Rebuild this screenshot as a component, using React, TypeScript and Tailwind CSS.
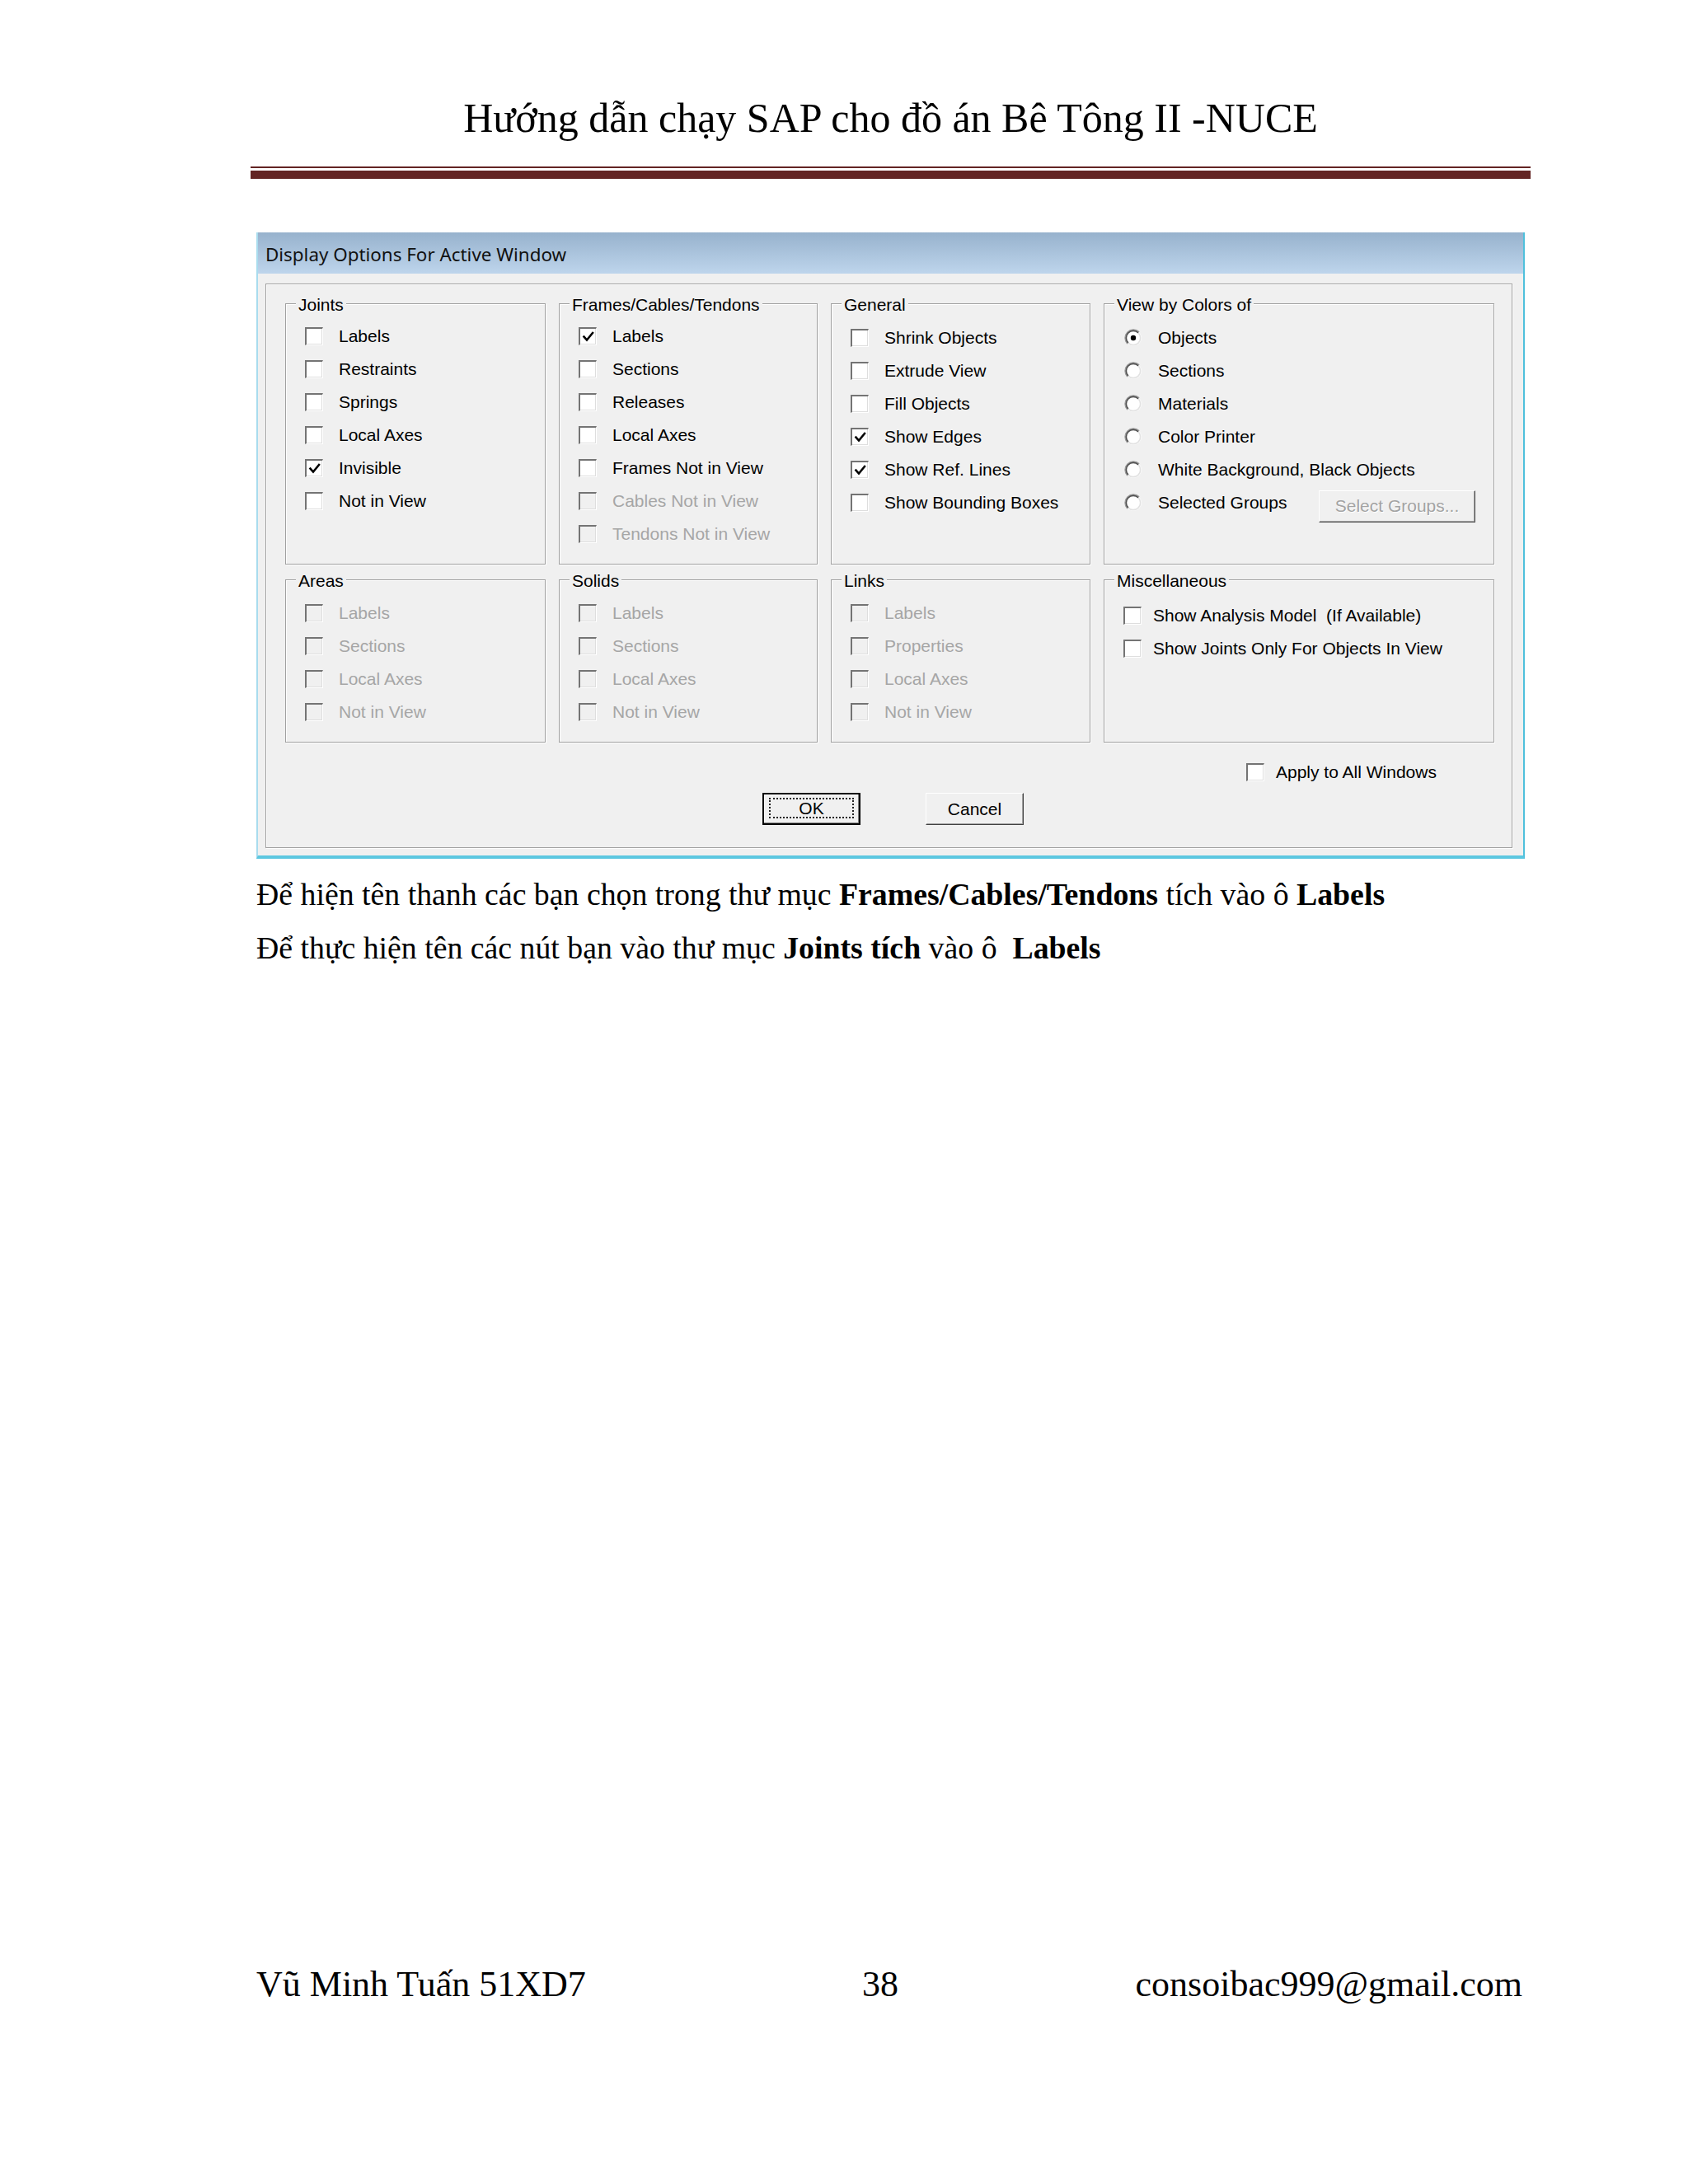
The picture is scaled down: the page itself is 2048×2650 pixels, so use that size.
import React from "react";

const SERIF = "font-['Liberation_Serif','Times_New_Roman',serif]";

function Check({ checked = false, disabled = false }: { checked?: boolean; disabled?: boolean }) {
  return (
    <span
      className={`flex h-[22px] w-[22px] shrink-0 items-center justify-center border-l-2 border-t-2 border-r border-b border-l-[#747474] border-t-[#747474] border-r-white border-b-white shadow-[inset_-1px_-1px_0_#dedede] ${
        disabled ? "bg-[#f0f0f0]" : "bg-white"
      }`}
    >
      {checked && (
        <svg width="18" height="18" viewBox="0 0 18 18">
          <path d="M3.5 8.5 L7 12.5 L14 4" stroke="#000" strokeWidth="2.6" fill="none" strokeLinecap="square" />
        </svg>
      )}
    </span>
  );
}

function Radio({ selected = false }: { selected?: boolean }) {
  return (
    <svg width="22" height="22" viewBox="0 0 22 22" className="shrink-0">
      <circle cx="11" cy="11" r="10" fill="#ffffff" />
      <path d="M3.93 18.07 A10 10 0 0 1 18.07 3.93" stroke="#9a9a9a" strokeWidth="1.6" fill="none" />
      <path d="M4.9 17.1 A8.6 8.6 0 0 1 17.1 4.9" stroke="#505050" strokeWidth="1.6" fill="none" />
      <path d="M17.1 4.9 A8.6 8.6 0 0 1 4.9 17.1" stroke="#e2e2e2" strokeWidth="1.6" fill="none" />
      {selected && <circle cx="11" cy="11" r="3.2" fill="#000" />}
    </svg>
  );
}

function CheckRow({
  label,
  checked = false,
  disabled = false,
  wide = true,
}: {
  label: string;
  checked?: boolean;
  disabled?: boolean;
  wide?: boolean;
}) {
  return (
    <div className="flex h-[40px] items-center">
      <Check checked={checked} disabled={disabled} />
      <span
        className={`${wide ? "ml-[19px]" : "ml-[14px]"} whitespace-pre leading-[24px] ${
          disabled ? "text-[#a6a6a6]" : "text-black"
        }`}
      >
        {label}
      </span>
    </div>
  );
}

function RadioRow({ label, selected = false, children }: { label: string; selected?: boolean; children?: React.ReactNode }) {
  return (
    <div className="flex h-[40px] items-center">
      <Radio selected={selected} />
      <span className="ml-[19px] leading-[24px] text-black">{label}</span>
      {children}
    </div>
  );
}

function Group({ title, children, pad }: { title: string; children: React.ReactNode; pad: string }) {
  return (
    <div className={`relative border border-[#a0a0a0] shadow-[inset_1px_1px_0_#ffffff,1px_1px_0_#ffffff] ${pad}`}>
      <span className="absolute -top-[11px] left-[12px] bg-[#f0f0f0] px-[3px] leading-[24px] text-black">{title}</span>
      {children}
    </div>
  );
}

function Dialog() {
  return (
    <div className="ml-[7px] mt-[65px] w-[1539px] border-l-2 border-r-2 border-b-4 border-l-[#a9dcee] border-r-[#4fc0dc] border-b-[#5cc7e0] font-['Liberation_Sans',Arial,sans-serif] text-[21px]">
      <div className="flex h-[50px] items-center bg-gradient-to-b from-[#97b2cd] to-[#bed5ec] pl-[9px] pt-[3px] font-['Noto_Sans',sans-serif] text-[22.4px] text-[#111]">
        Display Options For Active Window
      </div>
      <div className="bg-[#f0f0f0] pb-[9px] pl-[9px] pr-[13px] pt-[12px]">
        <div className="border border-[#a0a0a0] pb-[27px] pl-[23px] pr-[21px] pt-[23px] shadow-[inset_1px_1px_0_#ffffff,1px_1px_0_#ffffff]">
          <div className="grid grid-cols-[316px_314px_315px_474px] grid-rows-[317px_198px] gap-x-[16px] gap-y-[18px]">
            <Group title="Joints" pad="pl-[23px] pt-[19px]">
              <CheckRow label="Labels" />
              <CheckRow label="Restraints" />
              <CheckRow label="Springs" />
              <CheckRow label="Local Axes" />
              <CheckRow label="Invisible" checked />
              <CheckRow label="Not in View" />
            </Group>
            <Group title="Frames/Cables/Tendons" pad="pl-[23px] pt-[19px]">
              <CheckRow label="Labels" checked />
              <CheckRow label="Sections" />
              <CheckRow label="Releases" />
              <CheckRow label="Local Axes" />
              <CheckRow label="Frames Not in View" />
              <CheckRow label="Cables Not in View" disabled />
              <CheckRow label="Tendons Not in View" disabled />
            </Group>
            <Group title="General" pad="pl-[23px] pt-[21px]">
              <CheckRow label="Shrink Objects" />
              <CheckRow label="Extrude View" />
              <CheckRow label="Fill Objects" />
              <CheckRow label="Show Edges" checked />
              <CheckRow label="Show Ref. Lines" checked />
              <CheckRow label="Show Bounding Boxes" />
            </Group>
            <Group title="View by Colors of" pad="pl-[24px] pr-[22px] pt-[21px]">
              <RadioRow label="Objects" selected />
              <RadioRow label="Sections" />
              <RadioRow label="Materials" />
              <RadioRow label="Color Printer" />
              <RadioRow label="White Background, Black Objects" />
              <RadioRow label="Selected Groups">
                <div className="ml-auto mt-[8px] flex h-[39px] w-[190px] shrink-0 items-center justify-center border border-l-white border-t-white border-r-[#505050] border-b-[#505050] bg-[#f0f0f0] text-[#a3a3a3] shadow-[inset_-1px_-1px_0_#a0a0a0] [text-shadow:1px_1px_0_#ffffff]">
                  Select Groups...
                </div>
              </RadioRow>
            </Group>
            <Group title="Areas" pad="pl-[23px] pt-[20px]">
              <CheckRow label="Labels" disabled />
              <CheckRow label="Sections" disabled />
              <CheckRow label="Local Axes" disabled />
              <CheckRow label="Not in View" disabled />
            </Group>
            <Group title="Solids" pad="pl-[23px] pt-[20px]">
              <CheckRow label="Labels" disabled />
              <CheckRow label="Sections" disabled />
              <CheckRow label="Local Axes" disabled />
              <CheckRow label="Not in View" disabled />
            </Group>
            <Group title="Links" pad="pl-[23px] pt-[20px]">
              <CheckRow label="Labels" disabled />
              <CheckRow label="Properties" disabled />
              <CheckRow label="Local Axes" disabled />
              <CheckRow label="Not in View" disabled />
            </Group>
            <Group title="Miscellaneous" pad="pl-[23px] pt-[23px]">
              <CheckRow label="Show Analysis Model  (If Available)" wide={false} />
              <CheckRow label="Show Joints Only For Objects In View" wide={false} />
            </Group>
          </div>
          <div className="mt-[16px] pl-[1166px]">
            <CheckRow label="Apply to All Windows" wide={false} />
          </div>
          <div className="mt-[5px] flex gap-[79px] pl-[579px]">
            <div className="flex h-[39px] w-[119px] items-stretch border-2 border-black bg-[#f0f0f0] px-[6px] pb-[6px] pt-[4px] shadow-[inset_-1px_-1px_0_#808080,inset_1px_1px_0_#ffffff]">
              <div className="flex flex-1 items-center justify-center border-2 border-dotted border-[#222] leading-none text-black">OK</div>
            </div>
            <div className="flex h-[39px] w-[119px] items-center justify-center border border-l-white border-t-white border-r-[#404040] border-b-[#404040] bg-[#f0f0f0] text-black shadow-[inset_-1px_-1px_0_#a0a0a0]">
              Cancel
            </div>
          </div>
        </div>
      </div>
    </div>
  );
}

export default function App() {
  return (
    <div className={`h-[2650px] w-[2048px] overflow-hidden bg-white pl-[304px] pt-[118px] text-black ${SERIF}`}>
      <div className="w-[1553px]">
        <div className="whitespace-nowrap text-center text-[50px] leading-[50px]">Hướng dẫn chạy SAP cho đồ án Bê Tông II -NUCE</div>
        <div className="mt-[34px] h-[2px] bg-[#632423]" />
        <div className="mt-[3px] h-[10px] bg-[#632423]" />
        <Dialog />
        <div className="ml-[7px] mt-[11px] text-[37.8px] leading-[65px]">
          <p className="whitespace-pre">
            Để hiện tên thanh các bạn chọn trong thư mục <b>Frames/Cables/Tendons</b> tích vào ô <b>Labels</b>
          </p>
          <p className="whitespace-pre">
            Để thực hiện tên các nút bạn vào thư mục <b>Joints tích</b> vào ô  <b>Labels</b>
          </p>
        </div>
        <div className="mt-[1200px] flex items-baseline whitespace-nowrap pl-[7px] pr-[10px] text-[44px] leading-[50px]">
          <span className="w-[735px]">Vũ Minh Tuấn 51XD7</span>
          <span>38</span>
          <span className="ml-auto">consoibac999@gmail.com</span>
        </div>
      </div>
    </div>
  );
}
